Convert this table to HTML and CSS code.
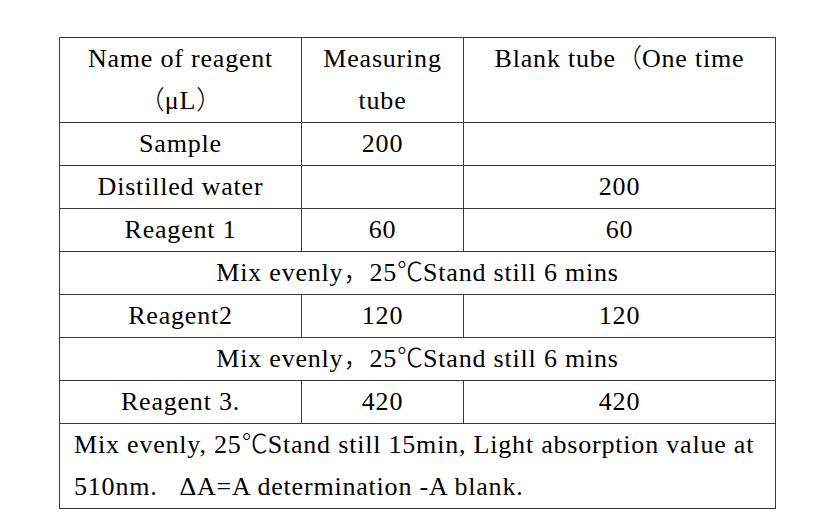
FILE: index.html
```html
<!DOCTYPE html>
<html>
<head>
<meta charset="utf-8">
<link rel="stylesheet" href="styles.css">
</head>
<body>
<div class="page">
<table class="reagents">
  <colgroup>
    <col class="c1"><col class="c2"><col class="c3">
  </colgroup>
  <tr>
    <td class="top">Name of reagent<br><span class="cjk">（</span>μL<span class="cjk">）</span></td>
    <td class="top">Measuring<br>tube</td>
    <td class="top">Blank tube<span class="cjk">（</span>One time</td>
  </tr>
  <tr><td>Sample</td><td>200</td><td></td></tr>
  <tr><td>Distilled water</td><td></td><td>200</td></tr>
  <tr><td>Reagent 1</td><td>60</td><td>60</td></tr>
  <tr><td colspan="3">Mix evenly<span class="cjk">，</span>25<span class="cjk">℃</span>Stand still 6 mins</td></tr>
  <tr><td>Reagent2</td><td>120</td><td>120</td></tr>
  <tr><td colspan="3">Mix evenly<span class="cjk">，</span>25<span class="cjk">℃</span>Stand still 6 mins</td></tr>
  <tr><td>Reagent 3.</td><td>420</td><td>420</td></tr>
  <tr><td colspan="3" class="note">Mix evenly, 25<span class="cjk">℃</span>Stand still 15min, Light absorption value at 510nm.&nbsp;&nbsp; ΔA=A determination -A blank.</td></tr>
</table>
</div>
</body>
</html>
```
FILE: styles.css
```css
html, body {
  margin: 0;
  padding: 0;
  background: #ffffff;
}
.page {
  padding: 37px 0 0 59px;
}
.reagents {
  border-collapse: collapse;
  table-layout: fixed;
  width: 716px;
  font-family: "Liberation Serif", "Times New Roman", serif;
  font-size: 26px;
  letter-spacing: 0.8px;
  line-height: 42px;
  color: #000000;
}
.cjk {
  font-family: "Noto Sans CJK SC", sans-serif;
  font-weight: 300;
  line-height: 1;
  letter-spacing: 0;
}
.c1 { width: 242px; }
.c2 { width: 162px; }
.c3 { width: 312px; }
.reagents td {
  border: 1px solid #3a3a3a;
  padding: 0;
  height: 42px;
  text-align: center;
  vertical-align: middle;
  white-space: nowrap;
}
.reagents td.top {
  vertical-align: top;
}
.reagents td.note {
  text-align: left;
  white-space: normal;
  padding: 0 2px 0 14px;
}
```
